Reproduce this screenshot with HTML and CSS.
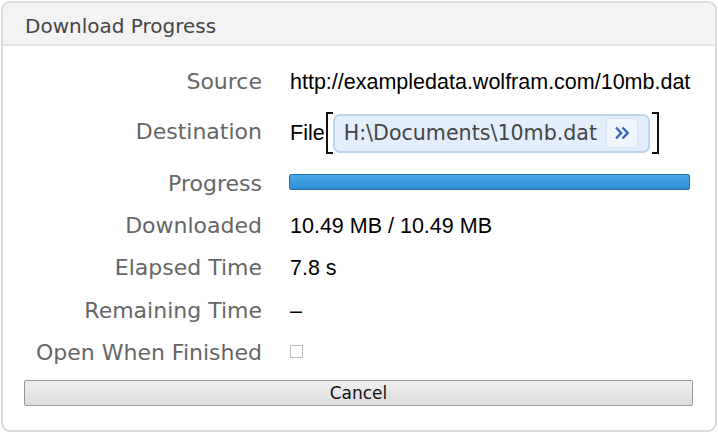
FILE: index.html
```html
<!DOCTYPE html>
<html lang="en">
<head>
    <meta charset="UTF-8">
    <title>Download Progress</title>
    <link rel="stylesheet" href="styles.css">
</head>
<body>
    <div class="panel">
        <div class="panel-header">Download Progress</div>

        <div class="details">
            <div class="divider"></div>

            <div class="label row-1">Source</div>
            <div class="value row-1">http://exampledata.wolfram.com/10mb.dat</div>

            <div class="label row-2">Destination</div>
            <div class="value row-2 dest">
                <span>File</span>
                <span class="bracket open"></span>
                <span class="file-box">
                    <span class="file-path">H:\Documents\10mb.dat</span>
                    <span class="file-btn">
                        <svg width="16" height="14" viewBox="0 0 16 14">
                            <path d="M2 1.5 L7.2 7 L2 12.5 M8.5 1.5 L13.7 7 L8.5 12.5" fill="none" stroke="#3b63c4" stroke-width="2.4"/>
                        </svg>
                    </span>
                </span>
                <span class="bracket close"></span>
            </div>

            <div class="label row-3">Progress</div>
            <div class="value row-3"><div class="progress"></div></div>

            <div class="label row-4">Downloaded</div>
            <div class="value row-4">10.49 MB / 10.49 MB</div>

            <div class="label row-5">Elapsed Time</div>
            <div class="value row-5">7.8 s</div>

            <div class="label row-6">Remaining Time</div>
            <div class="value row-6">–</div>

            <div class="label row-7">Open When Finished</div>
            <div class="value row-7"><span class="checkbox"></span></div>
        </div>

        <button class="cancel-button">Cancel</button>
    </div>
</body>
</html>
```

FILE: styles.css
```css
* {
    margin: 0;
    padding: 0;
    box-sizing: border-box;
}

body {
    background: #ffffff;
    font-family: 'Liberation Sans', Arial, sans-serif;
}

.panel {
    margin: 1px;
    width: 716px;
    height: 431px;
    border: 2px solid #dadada;
    border-radius: 9px;
    overflow: hidden;
    background: #ffffff;
}

.panel-header {
    height: 43px;
    padding: 5px 22px 0;
    display: flex;
    align-items: center;
    background: #f3f3f3;
    border-bottom: 2px solid #e3e3e3;
    font-family: 'DejaVu Sans', sans-serif;
    font-size: 20px;
    color: #454545;
}

.details {
    margin-top: 21px;
    display: grid;
    grid-template-columns: 273px 2px 1fr;
    grid-template-rows: 26px 44px 26px 26px 26px 26px 35px;
    row-gap: 16px;
    align-items: start;
}

.divider {
    grid-column: 2;
    grid-row: 1 / -1;
    background: #d9d9d9;
}

.label {
    grid-column: 1;
    padding: 2px 14px 0 0;
    text-align: right;
    font-family: 'DejaVu Sans', sans-serif;
    font-size: 22px;
    line-height: 26px;
    color: #666666;
}

.value {
    grid-column: 3;
    padding: 2px 0 0 12px;
    font-size: 21.5px;
    line-height: 26px;
    color: #000000;
}

.row-1 { grid-row: 1; }
.row-2 { grid-row: 2; }
.row-3 { grid-row: 3; }
.row-4 { grid-row: 4; }
.row-5 { grid-row: 5; }
.row-6 { grid-row: 6; }
.row-7 { grid-row: 7; }

.label.row-2 {
    padding-top: 10px;
}

.value.row-2 {
    padding-top: 3px;
}

.label.row-6,
.value.row-6,
.label.row-7,
.value.row-7 {
    padding-top: 3px;
}

.dest {
    display: flex;
    align-items: center;
}

.bracket {
    width: 7px;
    height: 42px;
    border: 2px solid #111111;
}

.bracket.open {
    border-right: none;
    margin-left: 1px;
}

.bracket.close {
    border-left: none;
    margin-left: 2px;
}

.file-box {
    display: flex;
    align-items: center;
    height: 39px;
    padding: 0 10px 0 9px;
    background: #e2eefb;
    border: 2px solid #bdd3ec;
    border-radius: 7px;
}

.file-path {
    font-family: 'DejaVu Sans', Verdana, sans-serif;
    font-size: 20.6px;
    color: #454545;
    margin-right: 9px;
}

.file-btn {
    width: 32px;
    height: 30px;
    display: flex;
    align-items: center;
    justify-content: center;
    background: #eff6fe;
    border: 1px solid #d6e4f4;
    border-radius: 4px;
}

.progress {
    margin: 3px 0 0 -1px;
    width: 401px;
    height: 16px;
    border: 1px solid #2b6ca4;
    border-radius: 2px;
    background: linear-gradient(#4aaaea, #2e8dd4);
}

.checkbox {
    display: inline-block;
    width: 13px;
    height: 13px;
    margin-top: 5px;
    border: 1px solid #bcbcbc;
    background: #ffffff;
    vertical-align: top;
}

.cancel-button {
    display: block;
    margin: 8px 22px 0 21px;
    width: calc(100% - 43px);
    height: 26px;
    border: 1px solid #999999;
    border-radius: 2px;
    background: linear-gradient(#efefef, #dddddd);
    font-family: 'DejaVu Sans', sans-serif;
    font-size: 17px;
    color: #111111;
}
```
